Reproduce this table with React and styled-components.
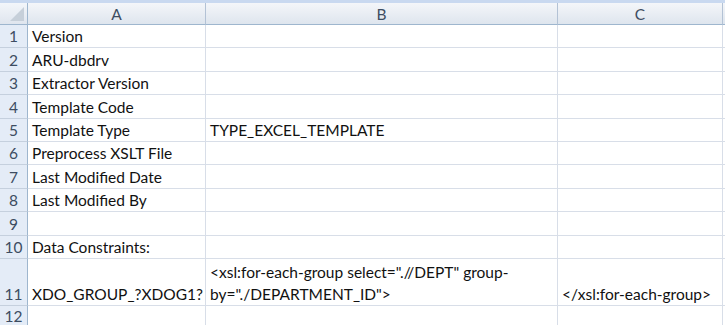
import styled, { createGlobalStyle } from "styled-components";

const Global = createGlobalStyle`
  html, body { margin: 0; padding: 0; background: #fff; }
  body { font-family: Lato, "Liberation Sans", sans-serif; overflow: hidden; }
`;

const TopStrip = styled.div`
  height: 3px;
  background: #c9d9f0;
`;

const Sheet = styled.div`
  display: grid;
  grid-template-columns: 28px 178px 352px 165px 1fr;
  grid-template-rows: ${(p) => p.$rows};
`;

const Corner = styled.div`
  position: relative;
  background: linear-gradient(#f3f6fa, #dfe5ee);
  border-right: 1px solid #9eb6ce;
  border-bottom: 1px solid #9eb6ce;
  &::after {
    content: "";
    position: absolute;
    right: 3px;
    bottom: 3px;
    border-left: 14px solid transparent;
    border-bottom: 14px solid #c6cfd9;
  }
`;

const ColHead = styled.div`
  background: linear-gradient(#f4f6f9, #dee5ee);
  border-right: 1px solid #b3c2d5;
  border-bottom: 1px solid #9eb6ce;
  display: flex;
  align-items: center;
  justify-content: center;
  font-size: 15.5px;
  color: #3d4d62;
`;

const RowHead = styled.div`
  background: #e4ecf7;
  border-right: 1px solid #9eb6ce;
  border-bottom: 1px solid #c5d0de;
  display: flex;
  align-items: flex-end;
  justify-content: center;
  font-size: 15.5px;
  line-height: 21px;
  color: #3d4d62;
`;

const Cell = styled.div`
  border-right: 1px solid #d8dee8;
  border-bottom: 1px solid #d8dee8;
  display: flex;
  align-items: flex-end;
  padding: 0 3px 0 4px;
  font-size: 15.5px;
  line-height: 21.5px;
  color: #111;
  white-space: ${(p) => (p.$wrap ? "normal" : "nowrap")};
`;

const heights = [22, 23, 24, 23, 24, 23, 23, 24, 23, 24, 23, 47, 22];

const rows = [
  ["Version", "", ""],
  ["ARU-dbdrv", "", ""],
  ["Extractor Version", "", ""],
  ["Template Code", "", ""],
  ["Template Type", "TYPE_EXCEL_TEMPLATE", ""],
  ["Preprocess XSLT File", "", ""],
  ["Last Modified Date", "", ""],
  ["Last Modified By", "", ""],
  ["", "", ""],
  ["Data Constraints:", "", ""],
  [
    "XDO_GROUP_?XDOG1?",
    '<xsl:for-each-group select=".//DEPT" group-by="./DEPARTMENT_ID">',
    "</xsl:for-each-group>",
  ],
  ["", "", ""],
];

export default function App() {
  return (
    <>
      <Global />
      <TopStrip />
      <Sheet $rows={heights.map((h) => h + "px").join(" ")}>
        <Corner />
        {["A", "B", "C", ""].map((c, i) => (
          <ColHead key={i}>{c}</ColHead>
        ))}
        {rows.map((r, i) => [
          <RowHead key={"h" + i}>{i + 1}</RowHead>,
          ...r.map((v, j) => (
            <Cell key={i + "-" + j} $wrap={i === 10 && j === 1}>
              {v}
            </Cell>
          )),
          <Cell key={i + "-d"} />,
        ])}
      </Sheet>
    </>
  );
}
